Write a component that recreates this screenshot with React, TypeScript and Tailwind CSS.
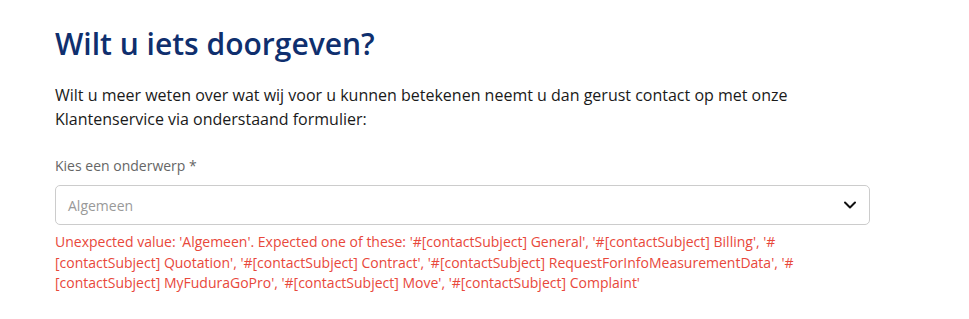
import React from "react";

export default function App() {
  return (
    <div className="w-[969px] h-[319px] bg-white overflow-hidden" style={{ fontFamily: '"Open Sans", sans-serif' }}>
      <div className="pl-[55px] pt-[24px] w-[870px]">
        <h1 className="text-[30px] leading-[40px] font-semibold text-[#0f2f6e]">Wilt u iets doorgeven?</h1>
        <p className="mt-[19px] text-[16px] leading-[24px] text-[#1a1a1a]">
          Wilt u meer weten over wat wij voor u kunnen betekenen neemt u dan gerust contact op met onze Klantenservice via onderstaand formulier:
        </p>
        <div className="mt-[25px] text-[14px] leading-[20px] text-[#666]">Kies een onderwerp *</div>
        <div className="mt-[9px] h-[40px] border border-[#ccc] rounded-[5px] flex items-center justify-between pl-[12px] pr-[12px]">
          <span className="text-[14px] text-[#999]">Algemeen</span>
          <svg width="14" height="14" viewBox="0 0 14 14" fill="none">
            <path d="M2 4.5 L7 9.5 L12 4.5" stroke="#111" strokeWidth="2" strokeLinecap="round" strokeLinejoin="round" />
          </svg>
        </div>
        <p className="mt-[7px] text-[14px] leading-[20.5px] text-[#e8483b]">
          Unexpected value: 'Algemeen'. Expected one of these: '#[contactSubject] General', '#[contactSubject] Billing', '#[contactSubject] Quotation', '#[contactSubject] Contract', '#[contactSubject] RequestForInfoMeasurementData', '#[contactSubject] MyFuduraGoPro', '#[contactSubject] Move', '#[contactSubject] Complaint'
        </p>
      </div>
    </div>
  );
}
